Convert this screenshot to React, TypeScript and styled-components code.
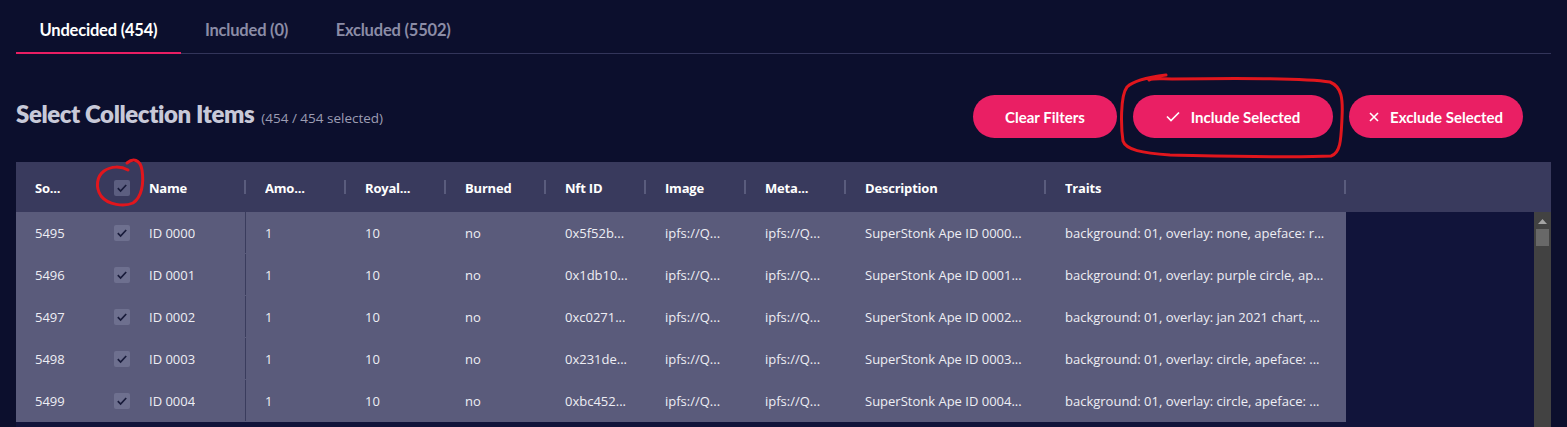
import styled, { createGlobalStyle } from "styled-components";

const GlobalStyle = createGlobalStyle`
  html, body {
    margin: 0;
    padding: 0;
    background: #0c0f2d;
  }
  * {
    box-sizing: border-box;
  }
`;

const Page = styled.div`
  position: relative;
  height: 100vh;
  overflow: hidden;
  display: flex;
  flex-direction: column;
  padding: 0 16px;
  font-family: "Open Sans", "Noto Sans", sans-serif;
`;

const TabBar = styled.div`
  display: flex;
  border-bottom: 1px solid #33355a;
`;

const Tab = styled.div<{ $active?: boolean }>`
  height: 54px;
  margin-bottom: -1px;
  padding: 8px 24px 0 23.5px;
  display: flex;
  align-items: center;
  font-family: "Lato", sans-serif;
  font-weight: 700;
  font-size: 16.5px;
  letter-spacing: -0.2px;
  color: ${(p) => (p.$active ? "#ffffff" : "#8b8ca6")};
  border-bottom: 2px solid ${(p) => (p.$active ? "#e91e63" : "transparent")};
`;

const Toolbar = styled.div`
  display: flex;
  align-items: center;
  justify-content: space-between;
  margin: 41px 0 24px;
  height: 43px;
`;

const TitleWrap = styled.div`
  display: flex;
  align-items: baseline;
  gap: 7px;
  margin-top: -7px;
`;

const Title = styled.h2`
  margin: 0;
  font-family: "Lato", sans-serif;
  font-weight: 800;
  font-size: 24px;
  letter-spacing: -0.4px;
  color: #c8c9d8;
`;

const Subtitle = styled.span`
  font-size: 13.5px;
  color: #9c9db3;
`;

const Buttons = styled.div`
  display: flex;
  gap: 16px;
  padding-right: 28px;
`;

const Button = styled.button<{ $w: number }>`
  width: ${(p) => p.$w}px;
  height: 43px;
  border: none;
  border-radius: 22px;
  background: #ea1f64;
  color: #ffffff;
  font-family: "Lato", sans-serif;
  font-weight: 700;
  font-size: 15px;
  display: flex;
  align-items: center;
  justify-content: center;
  gap: 11px;
  cursor: pointer;
  svg {
    flex-shrink: 0;
  }
`;

const Table = styled.div`
  flex: 1;
  display: flex;
  flex-direction: column;
  min-height: 0;
  background: #11143a;
`;

const HeaderRow = styled.div`
  display: flex;
  height: 50px;
  background: #393a5d;
  flex-shrink: 0;
`;

const HeaderCell = styled.div<{ $w: number; $pl: number; $center?: boolean }>`
  width: ${(p) => p.$w}px;
  flex-shrink: 0;
  display: flex;
  align-items: center;
  justify-content: ${(p) => (p.$center ? "center" : "flex-start")};
  padding-left: ${(p) => p.$pl}px;
  padding-top: 2px;
  font-weight: 700;
  font-size: 13px;
  letter-spacing: -0.2px;
  color: #ffffff;
`;

const Label = styled.span`
  flex: 1;
  white-space: nowrap;
  overflow: hidden;
  text-overflow: ellipsis;
`;

const Separator = styled.span`
  width: 2px;
  height: 14px;
  margin-top: -2px;
  background: #5a5c7d;
  flex-shrink: 0;
`;

const Body = styled.div`
  flex: 1;
  display: flex;
  min-height: 0;
`;

const Rows = styled.div`
  display: flex;
  flex-direction: column;
`;

const Row = styled.div`
  display: flex;
  height: 42px;
  padding-bottom: 1px;
  background: #5a5b7b;
`;

const Cell = styled.div<{ $w: number; $pl: number; $center?: boolean; $border?: boolean }>`
  width: ${(p) => p.$w}px;
  flex-shrink: 0;
  display: flex;
  align-items: center;
  justify-content: ${(p) => (p.$center ? "center" : "flex-start")};
  padding: 0 ${(p) => (p.$center ? 0 : 18)}px 0 ${(p) => p.$pl}px;
  font-size: 13px;
  color: #eeeef4;
  white-space: nowrap;
  overflow: hidden;
  border-right: ${(p) => (p.$border ? "1px solid #3a3c5d" : "none")};
`;

const CellText = styled.span`
  overflow: hidden;
  text-overflow: ellipsis;
`;

const Filler = styled.div`
  flex: 1;
`;

const ScrollTrack = styled.div`
  width: 17px;
  background: #424242;
  display: flex;
  flex-direction: column;
  align-items: center;
  padding-top: 7px;
  gap: 5px;
`;

const ScrollThumb = styled.div`
  width: 13px;
  height: 17px;
  background: #686868;
`;

const CheckBox = styled.span<{ $header?: boolean }>`
  width: 16px;
  height: 16px;
  border-radius: 2px;
  background: ${(p) => (p.$header ? "#5c5e80" : "#6e708f")};
  display: flex;
  align-items: center;
  justify-content: center;
`;

const Annotations = styled.svg`
  position: absolute;
  top: 0;
  left: 0;
  pointer-events: none;
`;

type Col = { key: string; label: string; w: number; pl: number; sep?: boolean; center?: boolean };

const columns: Col[] = [
  { key: "sort", label: "So...", w: 80, pl: 19 },
  { key: "check", label: "", w: 52, pl: 0, center: true },
  { key: "name", label: "Name", w: 98, pl: 1, sep: true },
  { key: "amount", label: "Amo...", w: 100, pl: 19, sep: true },
  { key: "royalty", label: "Royal...", w: 100, pl: 19, sep: true },
  { key: "burned", label: "Burned", w: 100, pl: 19, sep: true },
  { key: "nft", label: "Nft ID", w: 100, pl: 19, sep: true },
  { key: "image", label: "Image", w: 100, pl: 19, sep: true },
  { key: "meta", label: "Meta...", w: 100, pl: 19, sep: true },
  { key: "desc", label: "Description", w: 200, pl: 19, sep: true },
  { key: "traits", label: "Traits", w: 300, pl: 19, sep: true },
];

const rows = [
  { sort: "5495", id: "0000", nft: "0x5f52b...", traits: "background: 01, overlay: none, apeface: r..." },
  { sort: "5496", id: "0001", nft: "0x1db10...", traits: "background: 01, overlay: purple circle, ap..." },
  { sort: "5497", id: "0002", nft: "0xc0271...", traits: "background: 01, overlay: jan 2021 chart, ..." },
  { sort: "5498", id: "0003", nft: "0x231de...", traits: "background: 01, overlay: circle, apeface: ..." },
  { sort: "5499", id: "0004", nft: "0xbc452...", traits: "background: 01, overlay: circle, apeface: ..." },
];

function Tick() {
  return (
    <svg width="12" height="12" viewBox="0 0 12 12">
      <polyline points="1.8,6.2 4.6,9 10.2,3" fill="none" stroke="#181b3a" strokeWidth="1.7" />
    </svg>
  );
}

function Box({ header }: { header?: boolean }) {
  return (
    <CheckBox $header={header}>
      <Tick />
    </CheckBox>
  );
}

export default function App() {
  const cellValue = (key: string, r: (typeof rows)[number]) => {
    switch (key) {
      case "sort":
        return r.sort;
      case "check":
        return <Box />;
      case "name":
        return `ID ${r.id}`;
      case "amount":
        return "1";
      case "royalty":
        return "10";
      case "burned":
        return "no";
      case "nft":
        return r.nft;
      case "image":
      case "meta":
        return "ipfs://Q...";
      case "desc":
        return `SuperStonk Ape ID ${r.id}...`;
      default:
        return r.traits;
    }
  };

  return (
    <>
      <GlobalStyle />
      <Page>
        <TabBar>
          <Tab $active>Undecided (454)</Tab>
          <Tab>Included (0)</Tab>
          <Tab>Excluded (5502)</Tab>
        </TabBar>

        <Toolbar>
          <TitleWrap>
            <Title>Select Collection Items</Title>
            <Subtitle>(454 / 454 selected)</Subtitle>
          </TitleWrap>
          <Buttons>
            <Button $w={144}>Clear Filters</Button>
            <Button $w={200}>
              <svg width="14" height="11" viewBox="0 0 14 11">
                <polyline points="1,5.5 5,9.5 13,1.5" fill="none" stroke="#fff" strokeWidth="1.7" />
              </svg>
              Include Selected
            </Button>
            <Button $w={174}>
              <svg width="10" height="10" viewBox="0 0 10 10">
                <path d="M1 1 L9 9 M9 1 L1 9" stroke="#fff" strokeWidth="1.6" />
              </svg>
              Exclude Selected
            </Button>
          </Buttons>
        </Toolbar>

        <Table>
          <HeaderRow>
            {columns.map((c) => (
              <HeaderCell key={c.key} $w={c.w} $pl={c.pl} $center={c.center}>
                {c.key === "check" ? <Box header /> : <Label>{c.label}</Label>}
                {c.sep && <Separator />}
              </HeaderCell>
            ))}
          </HeaderRow>
          <Body>
            <Rows>
              {rows.map((r) => (
                <Row key={r.sort}>
                  {columns.map((c) => (
                    <Cell
                      key={c.key}
                      $w={c.w}
                      $pl={c.pl}
                      $center={c.center}
                      $border={c.key === "name"}
                    >
                      {c.key === "check" ? cellValue(c.key, r) : <CellText>{cellValue(c.key, r)}</CellText>}
                    </Cell>
                  ))}
                </Row>
              ))}
            </Rows>
            <Filler />
            <ScrollTrack>
              <svg width="9" height="5" viewBox="0 0 9 5">
                <path d="M4.5 0 L9 5 L0 5 Z" fill="#a3a3a3" />
              </svg>
              <ScrollThumb />
            </ScrollTrack>
          </Body>
        </Table>

        <Annotations width="1567" height="427" viewBox="0 0 1567 427">
          <path
            d="M 1166 75 C 1150 77, 1134 80, 1127 87 C 1120 96, 1121 128, 1123 141 C 1126 150, 1142 153, 1170 155 C 1220 156, 1290 158, 1331 156 C 1341 153, 1341 138, 1342 118 C 1343 99, 1342 87, 1330 82 C 1305 78, 1240 78, 1172 79 C 1160 79, 1154 78, 1149 80"
            fill="none"
            stroke="#e1161d"
            strokeWidth="3"
            strokeLinecap="round"
          />
          <path
            d="M 127 163 C 133 158, 140 159, 142 170 C 144 183, 142 197, 133 203 C 124 207, 108 205, 101 196 C 95 187, 97 176, 104 171 C 111 166, 121 166, 128 170"
            fill="none"
            stroke="#e1161d"
            strokeWidth="3"
            strokeLinecap="round"
          />
        </Annotations>
      </Page>
    </>
  );
}
